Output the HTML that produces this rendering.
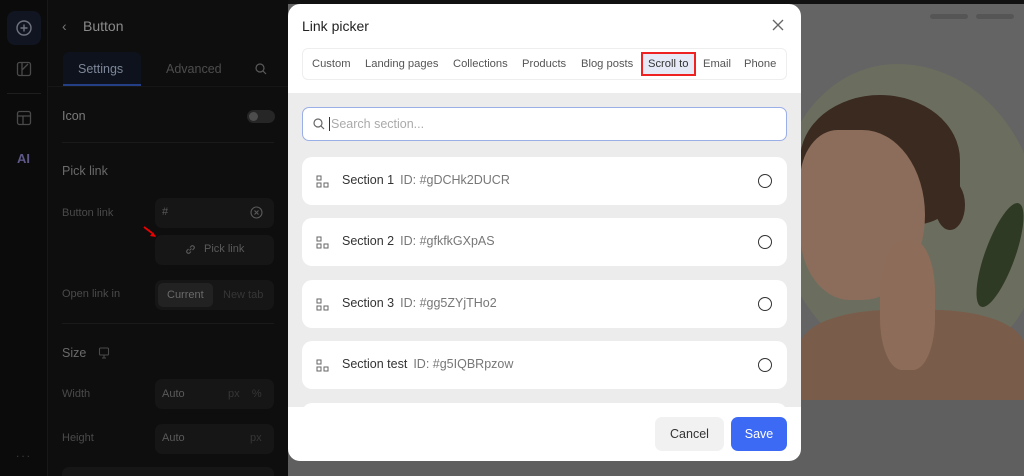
<!DOCTYPE html>
<html><head><meta charset="utf-8"><style>
*{box-sizing:border-box;margin:0;padding:0}
html,body{width:1024px;height:476px;overflow:hidden;background:#0e0e0e}
body{font-family:"Liberation Sans",sans-serif;position:relative}
.abs{position:absolute}
.lt{color:#4a4a4a;font-size:11px}
.box{position:absolute;background:#161616;border-radius:7px}
.modal{position:absolute;left:288px;top:4px;width:513px;height:457px;background:#fff;border-radius:12px;overflow:hidden}
.tab{position:absolute;top:54px;font-size:11.2px;color:#555}
.row{position:absolute;left:14px;width:485px;height:48px;background:#fff;border-radius:10px}
.row .ic{position:absolute;left:14px;top:18px}
.row .t{position:absolute;left:40px;top:16px;font-size:12.5px;color:#333}
.row .t span{color:#777;margin-left:6px}
.row .r{position:absolute;right:15px;top:17px;width:14px;height:14px;border:1.3px solid #333;border-radius:50%}
</style></head><body>
<div class="abs" style="left:0;top:0;width:288px;height:476px;background:#0e0e0e"></div>
<!-- rail -->
<div class="abs" style="left:0;top:0;width:48px;height:476px;background:#0b0b0b;border-right:1px solid #181818"></div>
<div class="abs" style="left:7px;top:11px;width:34px;height:34px;background:#111521;border-radius:8px"></div>
<svg class="abs" style="left:15px;top:19px" width="18" height="18" viewBox="0 0 18 18" fill="none" stroke="#6f7480" stroke-width="1.4"><circle cx="9" cy="9" r="7"/><path d="M9 5.5v7M5.5 9h7"/></svg>
<svg class="abs" style="left:16px;top:61px" width="16" height="16" viewBox="0 0 16 16" fill="none" stroke="#4a4a4a" stroke-width="1.3"><rect x="1.5" y="1.5" width="13" height="13" rx="2"/><path d="M6 1.5v13M6 9l6-6"/></svg>
<div class="abs" style="left:7px;top:93px;width:34px;height:1px;background:#1e1e1e"></div>
<svg class="abs" style="left:16px;top:110px" width="16" height="16" viewBox="0 0 16 16" fill="none" stroke="#4a4a4a" stroke-width="1.3"><rect x="1.5" y="1.5" width="13" height="13" rx="2"/><path d="M1.5 6h13M7 6v8.5"/></svg>
<div class="abs" style="left:17px;top:151px;color:#5d5888;font-size:13px;font-weight:bold">AI</div>
<div class="abs" style="left:16px;top:446px;color:#3a3a3a;font-size:12px;letter-spacing:2px">...</div>
<!-- panel -->
<div class="abs" style="left:62px;top:18px;color:#777;font-size:14px">‹</div>
<div class="abs" style="left:83px;top:18px;color:#8a8a8a;font-size:14px">Button</div>
<div class="abs" style="left:63px;top:52px;width:78px;height:34px;background:#0e121c;border-radius:6px 6px 0 0;border-bottom:2px solid #243f85"></div>
<div class="abs" style="left:78px;top:62px;color:#7d8799;font-size:12.5px">Settings</div>
<div class="abs" style="left:166px;top:62px;color:#4d4d4d;font-size:12.5px">Advanced</div>
<svg class="abs" style="left:255px;top:63px" width="12" height="12" viewBox="0 0 12 12" fill="none" stroke="#5a5a5a" stroke-width="1.2"><circle cx="5" cy="5" r="4"/><path d="M8 8l3 3"/></svg>
<div class="abs" style="left:48px;top:86px;width:240px;height:1px;background:#161616"></div>
<div class="abs" style="left:62px;top:109px;color:#7a7a7a;font-size:12.5px">Icon</div>
<div class="abs" style="left:247px;top:110px;width:28px;height:13px;background:#262626;border-radius:7px"></div>
<div class="abs" style="left:249px;top:112px;width:9px;height:9px;background:#4d4d4d;border-radius:50%"></div>
<div class="abs" style="left:62px;top:142px;width:212px;height:1px;background:#1a1a1a"></div>
<div class="abs" style="left:62px;top:164px;color:#6a6a6a;font-size:12.5px">Pick link</div>
<div class="abs lt" style="left:62px;top:207px">Button link</div>
<div class="box" style="left:155px;top:198px;width:119px;height:30px"></div>
<div class="abs" style="left:162px;top:206px;color:#5a5a5a;font-size:11px">#</div>
<svg class="abs" style="left:250px;top:206px" width="13" height="13" viewBox="0 0 13 13" fill="none" stroke="#5a5a5a" stroke-width="1.1"><circle cx="6.5" cy="6.5" r="5.5"/><path d="M4.5 4.5l4 4M8.5 4.5l-4 4"/></svg>
<svg class="abs" style="left:143px;top:226px" width="14" height="12" viewBox="0 0 14 12"><path d="M1 1l8 6" stroke="#e00" stroke-width="1.8"/><path d="M13 11l-6-1 3-4z" fill="#e00"/></svg>
<div class="box" style="left:155px;top:235px;width:119px;height:30px"></div>
<svg class="abs" style="left:185px;top:244px" width="11" height="11" viewBox="0 0 11 11" fill="none" stroke="#5a5a5a" stroke-width="1.1"><path d="M4.5 6.5l2-2M3.5 5L2 6.5a1.8 1.8 0 002.5 2.5L6 7.5M7.5 6L9 4.5A1.8 1.8 0 006.5 2L5 3.5"/></svg>
<div class="abs" style="left:204px;top:243px;color:#5a5a5a;font-size:11px">Pick link</div>
<div class="abs lt" style="left:62px;top:288px">Open link in</div>
<div class="box" style="left:155px;top:280px;width:119px;height:30px"></div>
<div class="abs" style="left:158px;top:283px;width:55px;height:24px;background:#222;border-radius:5px"></div>
<div class="abs" style="left:167px;top:289px;color:#6a6a6a;font-size:11px">Current</div>
<div class="abs" style="left:223px;top:289px;color:#363636;font-size:11px">New tab</div>
<div class="abs" style="left:62px;top:323px;width:212px;height:1px;background:#1a1a1a"></div>
<div class="abs" style="left:62px;top:346px;color:#6a6a6a;font-size:12.5px">Size</div>
<svg class="abs" style="left:98px;top:347px" width="12" height="12" viewBox="0 0 12 12" fill="none" stroke="#4a4a4a" stroke-width="1.1"><rect x="1.5" y="1" width="9" height="7" rx="1"/><path d="M4 11h4M6 8v3"/></svg>
<div class="abs lt" style="left:62px;top:388px">Width</div>
<div class="box" style="left:155px;top:379px;width:119px;height:30px"></div>
<div class="abs" style="left:162px;top:388px;color:#5a5a5a;font-size:11px">Auto</div>
<div class="abs" style="left:228px;top:388px;color:#363636;font-size:11px">px &nbsp;&nbsp; %</div>
<div class="abs lt" style="left:62px;top:432px">Height</div>
<div class="box" style="left:155px;top:424px;width:119px;height:30px"></div>
<div class="abs" style="left:162px;top:432px;color:#5a5a5a;font-size:11px">Auto</div>
<div class="abs" style="left:250px;top:432px;color:#363636;font-size:11px">px</div>
<div class="box" style="left:62px;top:467px;width:212px;height:20px"></div>
<!-- preview -->
<div class="abs" style="left:288px;top:0;width:736px;height:476px;background:#5f5f5f"></div>
<div class="abs" style="left:288px;top:0;width:736px;height:4px;background:#111"></div>
<div class="abs" style="left:288px;top:4px;width:736px;height:26px;background:#646464"></div>
<div class="abs" style="left:930px;top:14px;width:38px;height:5px;background:#555;border-radius:3px"></div>
<div class="abs" style="left:976px;top:14px;width:38px;height:5px;background:#555;border-radius:3px"></div>
<div class="abs" style="left:800px;top:30px;width:224px;height:370px;background:#646464"></div>
<div class="abs" style="left:780px;top:64px;width:260px;height:300px;background:#6b6e5e;border-radius:45% 55% 40% 50%"></div>
<div class="abs" style="left:800px;top:95px;width:160px;height:130px;background:#3a2a20;border-radius:50% 50% 30% 30%"></div>
<div class="abs" style="left:800px;top:130px;width:125px;height:170px;background:#8c6c5a;border-radius:30% 50% 50% 40%"></div>
<div class="abs" style="left:935px;top:180px;width:30px;height:50px;background:#3a2a20;border-radius:50%"></div>
<div class="abs" style="left:800px;top:310px;width:224px;height:90px;background:#7a5c4a;border-radius:40% 40% 0 0"></div>
<div class="abs" style="left:880px;top:240px;width:55px;height:130px;background:#8d6c5a;border-radius:40%"></div>
<div class="abs" style="left:985px;top:200px;width:30px;height:110px;background:#2f3a25;border-radius:50%;transform:rotate(20deg)"></div>
<!-- modal -->
<div class="modal">
 <div class="abs" style="left:14px;top:14px;font-size:14px;color:#222">Link picker</div>
 <svg class="abs" style="left:484px;top:15px" width="12" height="12" viewBox="0 0 12 12" stroke="#666" stroke-width="1.3"><path d="M1 1l10 10M11 1L1 11"/></svg>
 <div class="abs" style="left:14px;top:44px;width:485px;height:32px;border:1px solid #eee;border-radius:6px"></div>
 <div class="tab" style="left:24px">Custom</div>
 <div class="tab" style="left:77px">Landing pages</div>
 <div class="tab" style="left:165px">Collections</div>
 <div class="tab" style="left:234px">Products</div>
 <div class="tab" style="left:293px">Blog posts</div>
 <div class="abs" style="left:353px;top:48px;width:55px;height:24px;background:#e6eaf7;border:2px solid #e22"></div>
 <div class="tab" style="left:360px;color:#333">Scroll to</div>
 <div class="tab" style="left:415px">Email</div>
 <div class="tab" style="left:456px">Phone</div>
 <div class="abs" style="left:0;top:89px;width:513px;height:314px;background:#ececec">
  <div class="abs" style="left:14px;top:14px;width:485px;height:34px;background:#fff;border:1px solid #9aaee8;border-radius:7px"></div>
  <svg class="abs" style="left:25px;top:25px" width="12" height="12" viewBox="0 0 12 12" fill="none" stroke="#666" stroke-width="1.2"><circle cx="5" cy="5" r="4"/><path d="M8 8l3 3"/></svg>
  <div class="abs" style="left:41px;top:24px;width:1px;height:14px;background:#333"></div>
  <div class="abs" style="left:43px;top:24px;font-size:12.5px;color:#aaa">Search section...</div>
  <div class="row" style="top:64px"><svg class="ic" width="13" height="13" viewBox="0 0 13 13" fill="none" stroke="#666" stroke-width="1"><rect x="1" y="1" width="4" height="4"/><rect x="1" y="8" width="4" height="4"/><rect x="8" y="8" width="4" height="4"/></svg><div class="t">Section 1<span>ID: #gDCHk2DUCR</span></div><div class="r"></div></div>
  <div class="row" style="top:125px"><svg class="ic" width="13" height="13" viewBox="0 0 13 13" fill="none" stroke="#666" stroke-width="1"><rect x="1" y="1" width="4" height="4"/><rect x="1" y="8" width="4" height="4"/><rect x="8" y="8" width="4" height="4"/></svg><div class="t">Section 2<span>ID: #gfkfkGXpAS</span></div><div class="r"></div></div>
  <div class="row" style="top:187px"><svg class="ic" width="13" height="13" viewBox="0 0 13 13" fill="none" stroke="#666" stroke-width="1"><rect x="1" y="1" width="4" height="4"/><rect x="1" y="8" width="4" height="4"/><rect x="8" y="8" width="4" height="4"/></svg><div class="t">Section 3<span>ID: #gg5ZYjTHo2</span></div><div class="r"></div></div>
  <div class="row" style="top:248px"><svg class="ic" width="13" height="13" viewBox="0 0 13 13" fill="none" stroke="#666" stroke-width="1"><rect x="1" y="1" width="4" height="4"/><rect x="1" y="8" width="4" height="4"/><rect x="8" y="8" width="4" height="4"/></svg><div class="t">Section test<span>ID: #g5IQBRpzow</span></div><div class="r"></div></div>
  <div class="row" style="top:310px"></div>
 </div>
 <div class="abs" style="left:367px;top:413px;width:69px;height:34px;background:#f1f1f1;border-radius:7px;font-size:12.5px;color:#333;text-align:center;line-height:34px">Cancel</div>
 <div class="abs" style="left:443px;top:413px;width:56px;height:34px;background:#3d6af5;border-radius:7px;font-size:12.5px;color:#fff;text-align:center;line-height:34px">Save</div>
</div>
</body></html>
